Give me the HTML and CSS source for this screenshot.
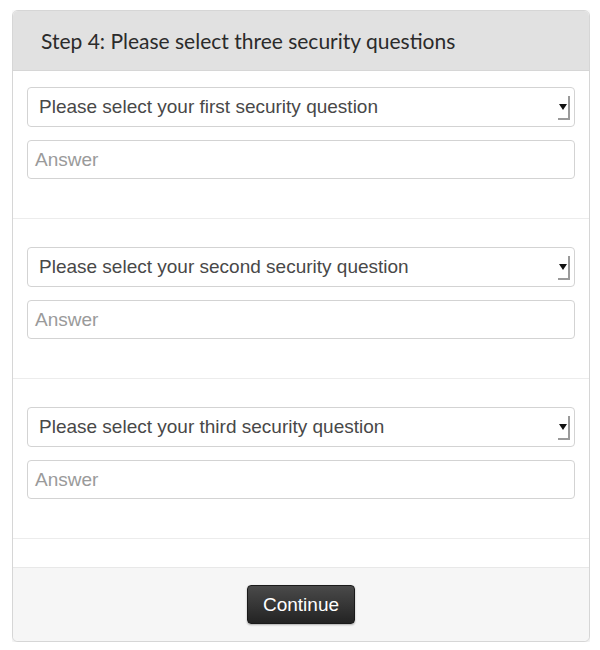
FILE: index.html
```html
<!DOCTYPE html>
<html>
<head>
<meta charset="utf-8">
<link rel="stylesheet" href="styles.css">
</head>
<body>
<div class="panel">
  <div class="panel-header">
    <h2 class="panel-title">Step 4: Please select three security questions</h2>
  </div>
  <div class="panel-body">
    <div class="question-group first">
      <div class="select-box">
        <span class="select-text">Please select your first security question</span>
        <span class="select-arrow"><span class="tri"></span></span>
      </div>
      <div class="answer-box"><span class="placeholder">Answer</span></div>
    </div>
    <div class="question-group">
      <div class="select-box">
        <span class="select-text">Please select your second security question</span>
        <span class="select-arrow"><span class="tri"></span></span>
      </div>
      <div class="answer-box"><span class="placeholder">Answer</span></div>
    </div>
    <div class="question-group">
      <div class="select-box">
        <span class="select-text">Please select your third security question</span>
        <span class="select-arrow"><span class="tri"></span></span>
      </div>
      <div class="answer-box"><span class="placeholder">Answer</span></div>
    </div>
    <div class="spacer"></div>
  </div>
  <div class="panel-footer">
    <button class="btn-continue">Continue</button>
  </div>
</div>
</body>
</html>
```
FILE: styles.css
```css
html, body {
  background: #ffffff;
}
body {
  margin: 10px 10px 0 12px;
  font-family: "Liberation Sans", Arial, sans-serif;
}
.panel {
  width: 578px;
  box-sizing: border-box;
  border: 1px solid #d6d6d6;
  border-radius: 6px;
  background: #fff;
  box-shadow: 0 1px 5px rgba(0,0,0,0.15);
  overflow: hidden;
}
.panel-header {
  height: 59px;
  background: #e1e1e1;
  border-bottom: 1px solid #d6d6d6;
  display: flex;
  align-items: center;
  padding-left: 28px;
}
.panel-title {
  margin: 0;
  font-family: Lato, "Open Sans", sans-serif;
  font-weight: 400;
  font-size: 21px;
  color: #2b2b2b;
}
.question-group {
  padding: 28px 14px 39px 14px;
  border-bottom: 1px solid #ececec;
  display: flex;
  flex-direction: column;
  gap: 13px;
}
.question-group.first {
  padding-top: 16px;
}
.select-box {
  height: 40px;
  box-sizing: border-box;
  border: 1px solid #d3d3d3;
  border-radius: 4px;
  background: #fff;
  display: flex;
  align-items: center;
  justify-content: space-between;
  padding: 0 4px 0 11px;
}
.select-text {
  font-size: 19px;
  color: #484848;
}
.select-arrow {
  width: 12px;
  height: 24px;
  border-right: 2px solid #9a9a9a;
  border-bottom: 2px solid #9a9a9a;
  display: flex;
  align-items: center;
  justify-content: center;
  box-sizing: border-box;
  margin-top: 2px;
}
.tri {
  width: 0;
  height: 0;
  border-left: 4px solid transparent;
  border-right: 4px solid transparent;
  border-top: 6px solid #111;
}
.answer-box {
  height: 39px;
  box-sizing: border-box;
  border: 1px solid #d3d3d3;
  border-radius: 4px;
  background: #fff;
  display: flex;
  align-items: center;
  padding-left: 7px;
}
.placeholder {
  font-size: 19px;
  color: #9a9a9a;
}
.spacer {
  height: 28px;
}
.panel-footer {
  height: 73px;
  background: #f6f6f6;
  border-top: 1px solid #e8e8e8;
  display: flex;
  align-items: center;
  justify-content: center;
}
.btn-continue {
  width: 108px;
  height: 39px;
  border: 1px solid #1a1a1a;
  border-radius: 4px;
  background: linear-gradient(#4a4a4a, #232323);
  color: #fff;
  font-family: "Liberation Sans", Arial, sans-serif;
  font-size: 19px;
  padding: 0;
  box-shadow: 0 1px 2px rgba(0,0,0,0.3);
}
```
